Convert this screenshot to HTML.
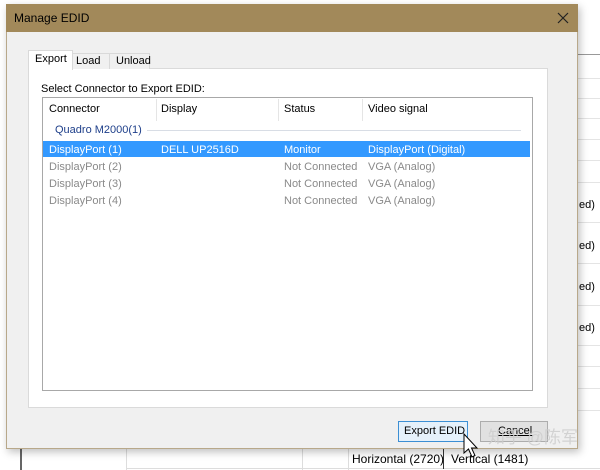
<!DOCTYPE html>
<html><head><style>
*{margin:0;padding:0;box-sizing:border-box}
body{width:600px;height:470px;overflow:hidden;background:#fff;font-family:"Liberation Sans",sans-serif;font-size:11px;color:#000;position:relative}
.a{position:absolute}
.hl{position:absolute;left:578px;width:22px;height:1px;background:#e4e4e4}
.t{position:absolute;white-space:nowrap}
.g{color:#8a8a8a}
</style></head><body>
<div class="a" style="left:578px;top:54px;width:22px;height:1px;background:#999"></div>
<div class="hl" style="top:78px"></div><div class="hl" style="top:98px"></div><div class="hl" style="top:118px"></div><div class="hl" style="top:139px"></div><div class="hl" style="top:160px"></div><div class="hl" style="top:182px"></div><div class="hl" style="top:222px"></div><div class="hl" style="top:263px"></div><div class="hl" style="top:305px"></div><div class="hl" style="top:345px"></div><div class="hl" style="top:366px"></div><div class="hl" style="top:388px"></div><div class="hl" style="top:410px"></div>
<div class="t" style="left:579px;top:199px">ed)</div>
<div class="t" style="left:579px;top:240px">ed)</div>
<div class="t" style="left:579px;top:281px">ed)</div>
<div class="t" style="left:579px;top:322px">ed)</div>
<div class="a" style="left:20px;top:449px;width:2px;height:21px;background:#666"></div>
<div class="a" style="left:126px;top:449px;width:1px;height:21px;background:#ddd"></div>
<div class="a" style="left:302px;top:449px;width:1px;height:21px;background:#ddd"></div>
<div class="a" style="left:348px;top:449px;width:1px;height:21px;background:#ddd"></div>
<div class="a" style="left:126px;top:468px;width:474px;height:1px;background:#ddd"></div>
<div class="a" style="left:443px;top:449px;width:1px;height:20px;background:#333"></div>
<div class="t" style="left:352px;top:452px;font-size:12px">Horizontal (2720)</div>
<div class="t" style="left:451px;top:452px;font-size:12px">Vertical (1481)</div>
<div class="a" style="left:6px;top:4px;width:572px;height:445px;background:#f0f0f0;border:1px solid #b8a88a;box-shadow:2px 3px 8px rgba(0,0,0,.25)"></div>
<div class="a" style="left:6px;top:4px;width:572px;height:28px;background:#a2895a"></div>
<div class="t" style="left:14px;top:11px;font-size:12px">Manage EDID</div>
<svg class="a" style="left:557px;top:12px" width="12" height="12"><path d="M1 1L11 11M11 1L1 11" stroke="#222" stroke-width="1.2"/></svg>
<div class="a" style="left:28px;top:68px;width:520px;height:340px;background:#fff;border:1px solid #dadada"></div>
<div class="a" style="left:72px;top:53px;width:38px;height:16px;background:#f0f0f0;border:1px solid #d9d9d9;border-bottom:none"></div>
<div class="a" style="left:109px;top:53px;width:41px;height:16px;background:#f0f0f0;border:1px solid #d9d9d9;border-bottom:none"></div>
<div class="a" style="left:28px;top:50px;width:45px;height:20px;background:#fff;border:1px solid #d9d9d9;border-bottom:none"></div>
<div class="t" style="left:35px;top:53px">Export</div>
<div class="t" style="left:76px;top:55px">Load</div>
<div class="t" style="left:116px;top:55px">Unload</div>
<div class="t" style="left:41px;top:83px">Select Connector to Export EDID:</div>
<div class="a" style="left:42px;top:97px;width:491px;height:294px;background:#fff;border:1px solid #a8a8a8"></div>
<div class="a" style="left:156px;top:99px;width:1px;height:22px;background:#e5e5e5"></div>
<div class="a" style="left:278px;top:99px;width:1px;height:22px;background:#e5e5e5"></div>
<div class="a" style="left:362px;top:99px;width:1px;height:22px;background:#e5e5e5"></div>
<div class="t" style="left:49px;top:103px">Connector</div>
<div class="t" style="left:161px;top:103px">Display</div>
<div class="t" style="left:284px;top:103px">Status</div>
<div class="t" style="left:368px;top:103px">Video signal</div>
<div class="t" style="left:55px;top:124px;color:#1e3f8a">Quadro M2000(1)</div>
<div class="a" style="left:147px;top:130px;width:374px;height:1px;background:#d8dde5"></div>
<div class="a" style="left:43px;top:141px;width:487px;height:16px;background:#3399ff"></div>
<div class="t" style="left:49px;top:144px;color:#fff">DisplayPort (1)</div>
<div class="t" style="left:161px;top:144px;color:#fff">DELL UP2516D</div>
<div class="t" style="left:284px;top:144px;color:#fff">Monitor</div>
<div class="t" style="left:368px;top:144px;color:#fff">DisplayPort (Digital)</div>
<div class="t g" style="left:49px;top:161px">DisplayPort (2)</div>
<div class="t g" style="left:284px;top:161px">Not Connected</div>
<div class="t g" style="left:368px;top:161px">VGA (Analog)</div>
<div class="t g" style="left:49px;top:178px">DisplayPort (3)</div>
<div class="t g" style="left:284px;top:178px">Not Connected</div>
<div class="t g" style="left:368px;top:178px">VGA (Analog)</div>
<div class="t g" style="left:49px;top:195px">DisplayPort (4)</div>
<div class="t g" style="left:284px;top:195px">Not Connected</div>
<div class="t g" style="left:368px;top:195px">VGA (Analog)</div>
<div class="a" style="left:398px;top:421px;width:70px;height:21px;background:#e5f1fb;border:1px solid #3c8fd4"></div>
<div class="t" style="left:404px;top:425px">Export EDID</div>
<div class="a" style="left:480px;top:421px;width:68px;height:21px;background:#e1e1e1;border:1px solid #adadad"></div>
<div class="t" style="left:498px;top:425px;text-decoration:underline">Cancel</div>
<div class="t" style="left:488px;top:423px;font-size:17px;color:rgba(205,205,205,.85);font-family:'Liberation Sans','Noto Sans CJK SC',sans-serif">知乎 @陈军</div>
<svg class="a" style="left:463px;top:433px" width="20" height="28"><path d="M1 1L1 20L5.5 16L9 24L12 22.5L8.5 15L14 15Z" fill="#fff" stroke="#000" stroke-width="1"/></svg>
</body></html>
